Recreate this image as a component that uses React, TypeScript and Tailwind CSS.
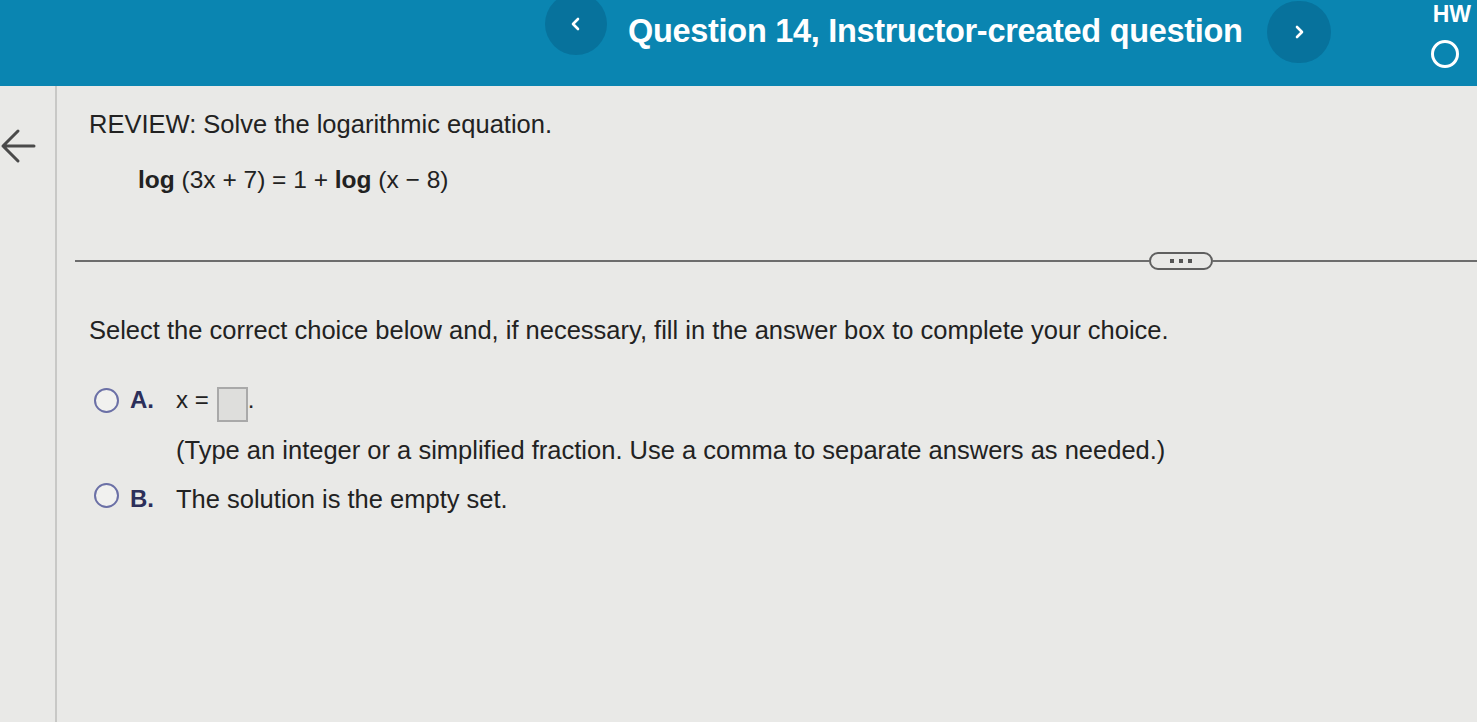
import React from 'react';

const Radio: React.FC = () => (
  <span className="inline-block w-[25px] h-[25px] rounded-full border-[2.5px] border-[#6b70a6] bg-[#f1f1ef] shrink-0" />
);

const Header: React.FC = () => (
  <div className="h-[86px] bg-[#0a85b1] flex items-start text-white">
    <div className="w-[545px]" />
    <button className="mt-[-7px] w-[62px] h-[62px] rounded-full bg-[#07729c] flex items-center justify-center">
      <svg width="14" height="14" viewBox="0 0 14 14" fill="none" stroke="white" strokeWidth="2.6" strokeLinecap="round" strokeLinejoin="round">
        <path d="M9 2 L4 7 L9 12" />
      </svg>
    </button>
    <h1 className="ml-[21px] mt-[7px] text-[32.5px] font-bold tracking-[-0.3px] whitespace-nowrap">
      Question 14, Instructor-created question
    </h1>
    <button className="ml-[24px] mt-[1px] w-[64px] h-[62px] rounded-full bg-[#07729c] flex items-center justify-center">
      <svg width="14" height="14" viewBox="0 0 14 14" fill="none" stroke="white" strokeWidth="2.6" strokeLinecap="round" strokeLinejoin="round">
        <path d="M5 2 L10 7 L5 12" />
      </svg>
    </button>
    <div className="ml-auto mr-[6px] flex flex-col items-start">
      <span className="text-[23px] font-bold leading-[28px]">HW</span>
      <span className="mt-[12px] ml-[-2px] w-[28px] h-[28px] rounded-full border-[3.5px] border-white" />
    </div>
  </div>
);

export default function App() {
  return (
    <div className="w-[1477px] h-[722px] overflow-hidden bg-[#e9e9e7] text-[#222] font-['Liberation_Sans',Arial,sans-serif]">
      <Header />
      <div className="flex h-[636px]">
        <aside className="w-[57px] border-r-2 border-[#c8c8c6] pt-[40px]">
          <svg width="40" height="40" viewBox="0 0 40 40" fill="none" stroke="#4a4a4a" strokeWidth="3" strokeLinecap="round" strokeLinejoin="round">
            <path d="M34 20 H3 M18 5 L3 20 L18 35" />
          </svg>
        </aside>
        <main className="flex-1 flex flex-col">
          <div className="pl-[32px] pt-[22px]">
            <p className="text-[25.5px] leading-[32px]">REVIEW: Solve the logarithmic equation.</p>
            <p className="mt-[24px] ml-[49px] text-[24.5px] leading-[32px]">
              <span className="font-bold">log</span> (3x + 7) = 1 + <span className="font-bold">log</span> (x − 8)
            </p>
          </div>
          <div className="mt-[56px] ml-[18px] flex items-center">
            <div className="flex-1 h-[2px] bg-[#6d6d6d]" />
            <div className="w-[64px] h-[18px] rounded-full border-2 border-[#5f5f5f] flex items-center justify-center gap-[5px]">
              <span className="w-[4px] h-[4px] bg-[#555]" />
              <span className="w-[4px] h-[4px] bg-[#555]" />
              <span className="w-[4px] h-[4px] bg-[#555]" />
            </div>
            <div className="w-[264px] h-[2px] bg-[#6d6d6d]" />
          </div>
          <div className="pl-[32px] pt-[44px]">
            <p className="text-[25.5px] leading-[32px]">
              Select the correct choice below and, if necessary, fill in the answer box to complete your choice.
            </p>
            <div className="mt-[40px] flex items-start">
              <div className="ml-[5px] mt-[2px]"><Radio /></div>
              <div className="ml-[11px] w-[46px] text-[24px] font-bold text-[#2c2f5a] leading-[28px]">A.</div>
              <div className="flex flex-col">
                <div className="flex items-end text-[24px] leading-[28px]">
                  <span>x =</span>
                  <span className="ml-[8px] w-[31px] h-[35px] border-2 border-[#a9a9a9] bg-[#dededc] mb-[-8px]" />
                  <span>.</span>
                </div>
                <p className="mt-[20px] text-[25.5px] leading-[32px]">
                  (Type an integer or a simplified fraction. Use a comma to separate answers as needed.)
                </p>
              </div>
            </div>
            <div className="mt-[17px] flex items-center">
              <div className="ml-[5px]"><Radio /></div>
              <div className="ml-[11px] w-[46px] text-[24px] font-bold text-[#2c2f5a] leading-[28px]">B.</div>
              <p className="text-[25.5px] leading-[30px]">The solution is the empty set.</p>
            </div>
          </div>
        </main>
      </div>
    </div>
  );
}
